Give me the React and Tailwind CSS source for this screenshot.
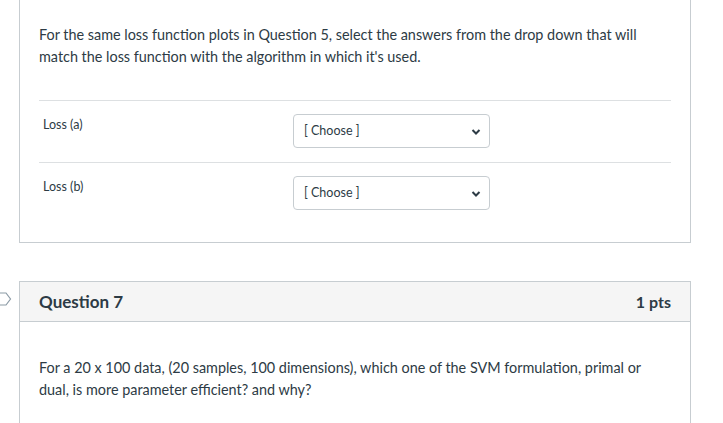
import React from "react";

function Select() {
  return (
    <div className="w-[197px] h-[34px] border border-[#c7cdd1] rounded-[4px] bg-white flex items-center justify-between pl-[10px] pr-[8px]">
      <span className="text-[12.5px] text-[#2d3b45]">[ Choose ]</span>
      <svg width="10" height="8" viewBox="0 0 10 8" className="mt-[1px]">
        <path d="M1.5 2 L5 5.5 L8.5 2" fill="none" stroke="#2d3b45" strokeWidth="2" />
      </svg>
    </div>
  );
}

export default function App() {
  return (
    <div className="relative w-[723px] h-[423px] overflow-hidden bg-white text-[#2d3b45]" style={{ fontFamily: "Lato, 'Noto Sans', sans-serif" }}>
      <div className="pl-[19px] w-[691px]">
        {/* Card 1 */}
        <div className="border-x border-b border-[#c7cdd1] px-[19px] pt-[24px] h-[243px]">
          <p className="text-[14.4px] leading-[22px] pr-[10px]">
            For the same loss function plots in Question 5, select the answers from the drop down that will match the loss function with the algorithm in which it's used.
          </p>
          <div className="mt-[32px] border-t border-[#dde0e2]">
            <div className="flex pt-[13px] pb-[14px] border-b border-[#dde0e2]">
              <div className="w-[254px] pl-[4px] pt-[3px] text-[12.5px] leading-[16px]">Loss (a)</div>
              <Select />
            </div>
            <div className="flex pt-[13px]">
              <div className="w-[254px] pl-[4px] pt-[3px] text-[12.5px] leading-[16px]">Loss (b)</div>
              <Select />
            </div>
          </div>
        </div>

        {/* Card 2 */}
        <div className="mt-[38px] border border-[#c7cdd1] h-[200px]">
          <div className="h-[40px] bg-[#f5f5f5] border-b border-[#c7cdd1] flex items-center justify-between px-[19px]">
            <span className="text-[17px] font-bold">Question 7</span>
            <span className="text-[16px] font-bold">1 pts</span>
          </div>
          <div className="px-[19px] pt-[35px]">
            <p className="text-[14.4px] leading-[22px] pr-[10px]">
              For a 20 x 100 data, (20 samples, 100 dimensions), which one of the SVM formulation, primal or dual, is more parameter efficient? and why?
            </p>
          </div>
        </div>
      </div>

      <svg className="absolute left-0 top-[292px]" width="12" height="14" viewBox="0 0 12 14">
        <path d="M-2 1 H6 L10.5 7 L6 13 H-2" fill="none" stroke="#8c9ba6" strokeWidth="1.2" />
      </svg>
    </div>
  );
}
